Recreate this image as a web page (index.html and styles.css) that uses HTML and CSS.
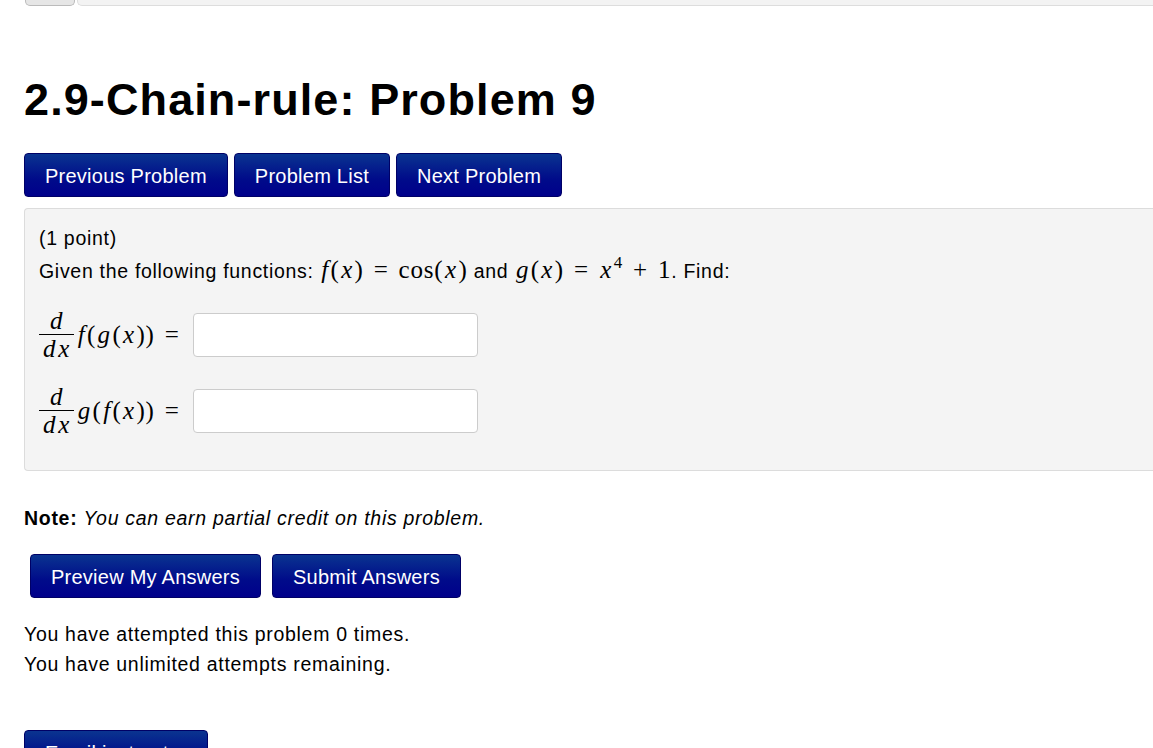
FILE: index.html
```html
<!DOCTYPE html>
<html>
<head>
<meta charset="utf-8">
<link rel="stylesheet" href="styles.css">
</head>
<body>
<div class="topbar">
  <div class="topbtn"></div>
  <div class="topstrip"></div>
</div>
<div class="page">
  <h1 class="title">2.9-Chain-rule: Problem 9</h1>
  <div class="navbtns">
    <a class="btn">Previous Problem</a>
    <a class="btn">Problem List</a>
    <a class="btn">Next Problem</a>
  </div>
  <div class="problem">
    <div class="line">(1 point)</div>
    <div class="line">Given the following functions: <span class="math"><i>f</i>(<i>x</i>)<span class="rel">=</span>cos(<i>x</i>)</span> and <span class="math"><i>g</i>(<i>x</i>)<span class="rel">=</span><i>x</i><sup>4</sup><span class="rel">+</span>1</span>. Find:</div>
    <div class="ansrow">
      <span class="math frac-expr"><span class="frac"><span class="num"><i>d</i></span><span class="den"><i>d</i><i>x</i></span></span><i>f</i>(<i>g</i>(<i>x</i>))<span class="rel">=</span></span>
      <span class="input"></span>
    </div>
    <div class="ansrow">
      <span class="math frac-expr"><span class="frac"><span class="num"><i>d</i></span><span class="den"><i>d</i><i>x</i></span></span><i>g</i>(<i>f</i>(<i>x</i>))<span class="rel">=</span></span>
      <span class="input"></span>
    </div>
  </div>
  <p class="note"><b>Note:</b> <i>You can earn partial credit on this problem.</i></p>
  <div class="submitbtns">
    <a class="btn">Preview My Answers</a>
    <a class="btn">Submit Answers</a>
  </div>
  <div class="attempts">
    <div>You have attempted this problem 0 times.</div>
    <div>You have unlimited attempts remaining.</div>
  </div>
  <div class="emailrow">
    <a class="btn">Email instructor</a>
  </div>
</div>
</body>
</html>
```
FILE: styles.css
```css
html, body {
  margin: 0;
  padding: 0;
  overflow: hidden;
  background: #fff;
}
body {
  font-family: "Liberation Sans", Arial, sans-serif;
  font-size: 19.5px;
  letter-spacing: 0.7px;
  color: #000;
}
.topbar {
  display: flex;
  height: 6px;
  padding-left: 25px;
  gap: 2px;
}
.topbtn {
  width: 48px;
  height: 5px;
  background: #e6e6e6;
  border: 1px solid #bbb;
  border-top: none;
  border-radius: 0 0 5px 5px;
}
.topstrip {
  flex: 1;
  height: 5px;
  background: #f3f3f3;
  border-bottom: 1px solid #ddd;
  border-left: 1px solid #ddd;
  border-radius: 0 0 0 5px;
}
.page {
  padding-left: 24px;
}
.title {
  margin: 0;
  padding-top: 64px;
  font-size: 45px;
  font-weight: bold;
  line-height: 60px;
  letter-spacing: 1.1px;
}
.navbtns {
  display: flex;
  gap: 6px;
  margin-top: 23px;
}
.btn {
  display: inline-block;
  height: 44px;
  line-height: 44px;
  padding: 0 20px;
  color: #fff;
  font-size: 20px;
  letter-spacing: 0.25px;
  border-radius: 4px;
  background: linear-gradient(#0a3490, #000b8a 60%, #00008b);
  border: 1px solid #000066;
  box-sizing: border-box;
  white-space: nowrap;
}
.problem {
  margin-top: 11px;
  height: 263px;
  box-sizing: border-box;
  background: #f4f4f4;
  border: 1px solid #dcdcdc;
  border-right: none;
  border-radius: 4px 0 0 4px;
  padding: 14px 0 0 14px;
}
.line {
  line-height: 31px;
}
.math {
  font-family: "Liberation Serif", "Times New Roman", serif;
  font-size: 25px;
  letter-spacing: 0.8px;
}
.math i {
  font-style: italic;
  padding: 0 1.5px;
}
.math sup {
  font-size: 17px;
  vertical-align: 10px;
  line-height: 0;
}
.rel {
  margin: 0 10px;
}
.ansrow {
  display: flex;
  align-items: center;
  height: 76px;
}
.problem .line + .ansrow {
  margin-top: 10px;
}
.frac-expr {
  display: inline-flex;
  align-items: center;
  width: 154px;
}
.frac {
  display: inline-flex;
  flex-direction: column;
  align-items: center;
  margin-right: 2px;
  font-size: 25px;
}
.frac i {
  padding: 0 1px;
}
.num {
  line-height: 26px;
  padding: 0 6px;
}
.den {
  line-height: 26px;
  border-top: 1.5px solid #000;
  padding: 1px 3px 0;
}
.input {
  display: block;
  width: 285px;
  height: 44px;
  box-sizing: border-box;
  background: #fff;
  border: 1px solid #ccc;
  border-radius: 4px;
}
.note {
  margin: 35px 0 0;
  line-height: 24px;
}
.submitbtns {
  display: flex;
  gap: 11px;
  margin: 24px 0 0 6px;
}
.attempts {
  margin-top: 21px;
  line-height: 30px;
}
.emailrow {
  margin-top: 51px;
}
```
